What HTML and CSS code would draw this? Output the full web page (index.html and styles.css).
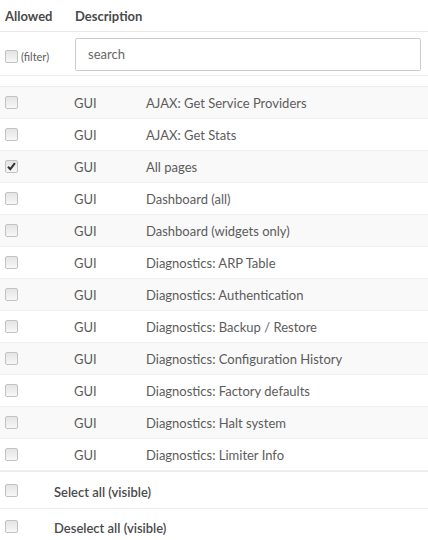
FILE: index.html
```html
<!DOCTYPE html>
<html>
<head>
<meta charset="utf-8">
<link rel="stylesheet" href="styles.css">
</head>
<body>
<div class="table">
  <div class="row head">
    <div class="c1">Allowed</div>
    <div class="c23">Description</div>
  </div>
  <div class="row filter">
    <div class="c1"><span class="cb"></span><span class="flabel">(filter)</span></div>
    <div class="c23"><div class="search">search</div></div>
  </div>
  <div class="spacer"></div>
  <div class="row data odd"><div class="c1"><span class="cb"></span></div><div class="c2">GUI</div><div class="c3">AJAX: Get Service Providers</div></div>
  <div class="row data"><div class="c1"><span class="cb"></span></div><div class="c2">GUI</div><div class="c3">AJAX: Get Stats</div></div>
  <div class="row data odd"><div class="c1"><span class="cb checked"><svg viewBox="0 0 13 13" width="13" height="13"><path d="M3 6.8 L5.3 9.2 L9.9 3.2" fill="none" stroke="#333" stroke-width="2"/></svg></span></div><div class="c2">GUI</div><div class="c3">All pages</div></div>
  <div class="row data"><div class="c1"><span class="cb"></span></div><div class="c2">GUI</div><div class="c3">Dashboard (all)</div></div>
  <div class="row data odd"><div class="c1"><span class="cb"></span></div><div class="c2">GUI</div><div class="c3">Dashboard (widgets only)</div></div>
  <div class="row data"><div class="c1"><span class="cb"></span></div><div class="c2">GUI</div><div class="c3">Diagnostics: ARP Table</div></div>
  <div class="row data odd"><div class="c1"><span class="cb"></span></div><div class="c2">GUI</div><div class="c3">Diagnostics: Authentication</div></div>
  <div class="row data"><div class="c1"><span class="cb"></span></div><div class="c2">GUI</div><div class="c3">Diagnostics: Backup / Restore</div></div>
  <div class="row data odd"><div class="c1"><span class="cb"></span></div><div class="c2">GUI</div><div class="c3">Diagnostics: Configuration History</div></div>
  <div class="row data"><div class="c1"><span class="cb"></span></div><div class="c2">GUI</div><div class="c3">Diagnostics: Factory defaults</div></div>
  <div class="row data odd"><div class="c1"><span class="cb"></span></div><div class="c2">GUI</div><div class="c3">Diagnostics: Halt system</div></div>
  <div class="row data"><div class="c1"><span class="cb"></span></div><div class="c2">GUI</div><div class="c3">Diagnostics: Limiter Info</div></div>
  <div class="row foot first"><div class="fcb"><span class="cb"></span></div><div class="ftext">Select all (visible)</div></div>
  <div class="row foot"><div class="fcb"><span class="cb"></span></div><div class="ftext">Deselect all (visible)</div></div>
</div>
</body>
</html>
```

FILE: styles.css
```css
html, body {
  margin: 0;
  padding: 0;
  background: #fff;
}
body {
  font-family: Lato, "Liberation Sans", sans-serif;
  font-size: 13px;
  color: #5c5c5c;
}
.table {
  width: 428px;
  display: flex;
  flex-direction: column;
}
.row {
  display: flex;
  align-items: center;
  box-sizing: border-box;
}
.head {
  height: 32px;
  border-bottom: 1px solid #e8e8e8;
  font-weight: bold;
  color: #4a4a4a;
}
.head .c1 { padding-top: 1px; }
.c1 {
  width: 74px;
  padding-left: 5px;
  box-sizing: border-box;
  display: flex;
  align-items: center;
}
.c23 {
  flex: 1;
  padding-left: 1px;
}
.c2 { width: 72px; }
.c3 { flex: 1; }
.filter {
  height: 44px;
  border-bottom: 1px solid #ececec;
}
.filter .c1 { padding-top: 6px; }
.flabel {
  font-size: 11px;
  margin-left: 3px;
}
.search {
  width: 346px;
  height: 33px;
  box-sizing: border-box;
  border: 1px solid #ccc;
  border-radius: 2px;
  padding-left: 12px;
  line-height: 31px;
  color: #666;
  font-size: 13px;
  margin-top: 1px;
}
.spacer {
  height: 10px;
  border-bottom: 1px solid #ececec;
}
.data {
  height: 32px;
  border-bottom: 1px solid #f0f0f0;
}
.data.odd { background: #f9f9f9; }
.data .c2 { padding-top: 1px; }
.data .c3 { padding-top: 1px; }
.cb {
  display: inline-block;
  width: 13px;
  height: 13px;
  box-sizing: border-box;
  border: 1px solid #c2c2c2;
  border-radius: 2px;
  background: linear-gradient(#e4e4e4, #f7f7f7);
  position: relative;
}
.cb svg {
  position: absolute;
  left: -1px;
  top: -1px;
}
.foot {
  height: 35px;
  border-bottom: 1px solid #ececec;
}
.foot.first {
  border-top: 1px solid #ececec;
  height: 38px;
}
.fcb {
  width: 54px;
  padding-left: 5px;
  box-sizing: border-box;
  display: flex;
}
.ftext {
  font-weight: 600;
  color: #4a4a4a;
  padding-top: 3px;
}
```
